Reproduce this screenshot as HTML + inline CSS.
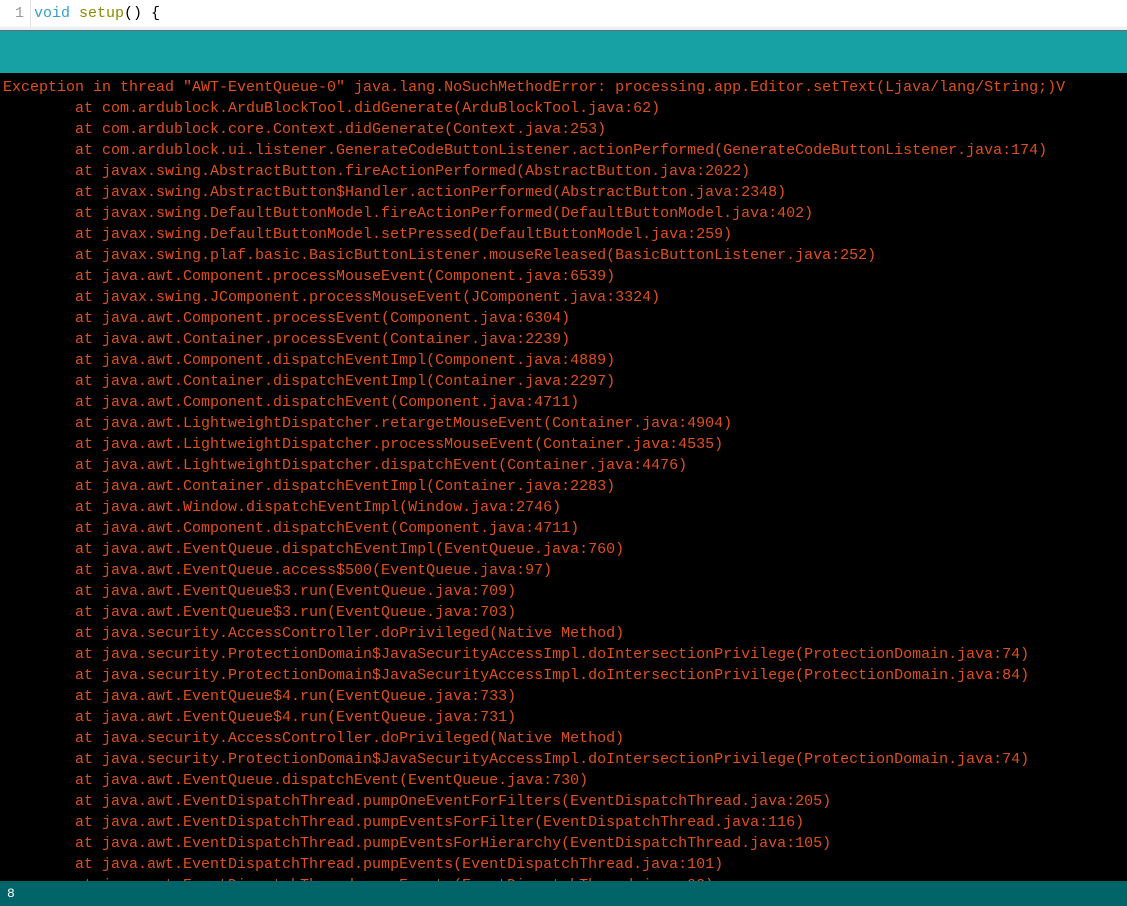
<!DOCTYPE html>
<html><head><meta charset="utf-8"><style>
*{margin:0;padding:0}
body{width:1127px;height:906px;overflow:hidden;background:#000;position:relative;font-family:"Liberation Mono",monospace}
#ed{position:absolute;left:0;top:0;width:1127px;height:27px;background:#fff}
#gut{position:absolute;left:0;top:0;width:31px;height:27px;border-right:1px solid #e0e0e0;color:#999;font-size:15px;line-height:27px;text-align:right;box-sizing:border-box;padding-right:6px}
#code{position:absolute;left:34px;top:0;font-size:15px;line-height:27px;color:#000}
#sep{position:absolute;left:0;top:27px;width:1127px;height:4px;background:#eceeef;border-bottom:1px solid #5e6f72;box-sizing:border-box}
#bar{position:absolute;left:0;top:31px;width:1127px;height:42px;background:#17a1a5}
#con{position:absolute;left:3px;top:77px;font-size:15px;line-height:21px;color:#e0501a;white-space:pre}
#st{position:absolute;left:0;top:881px;width:1127px;height:25px;background:#006468;color:#fff;font-size:13px;line-height:25px;padding-left:7px;font-family:"Liberation Mono",monospace}
</style></head><body>
<div id="ed"><div id="gut">1</div><div id="code"><span style="color:#33a1c9">void</span> <span style="color:#8c8c00">setup</span>() {</div></div>
<div id="sep"></div>
<div id="bar"></div>
<div id="con">Exception in thread "AWT-EventQueue-0" java.lang.NoSuchMethodError: processing.app.Editor.setText(Ljava/lang/String;)V
        at com.ardublock.ArduBlockTool.didGenerate(ArduBlockTool.java:62)
        at com.ardublock.core.Context.didGenerate(Context.java:253)
        at com.ardublock.ui.listener.GenerateCodeButtonListener.actionPerformed(GenerateCodeButtonListener.java:174)
        at javax.swing.AbstractButton.fireActionPerformed(AbstractButton.java:2022)
        at javax.swing.AbstractButton$Handler.actionPerformed(AbstractButton.java:2348)
        at javax.swing.DefaultButtonModel.fireActionPerformed(DefaultButtonModel.java:402)
        at javax.swing.DefaultButtonModel.setPressed(DefaultButtonModel.java:259)
        at javax.swing.plaf.basic.BasicButtonListener.mouseReleased(BasicButtonListener.java:252)
        at java.awt.Component.processMouseEvent(Component.java:6539)
        at javax.swing.JComponent.processMouseEvent(JComponent.java:3324)
        at java.awt.Component.processEvent(Component.java:6304)
        at java.awt.Container.processEvent(Container.java:2239)
        at java.awt.Component.dispatchEventImpl(Component.java:4889)
        at java.awt.Container.dispatchEventImpl(Container.java:2297)
        at java.awt.Component.dispatchEvent(Component.java:4711)
        at java.awt.LightweightDispatcher.retargetMouseEvent(Container.java:4904)
        at java.awt.LightweightDispatcher.processMouseEvent(Container.java:4535)
        at java.awt.LightweightDispatcher.dispatchEvent(Container.java:4476)
        at java.awt.Container.dispatchEventImpl(Container.java:2283)
        at java.awt.Window.dispatchEventImpl(Window.java:2746)
        at java.awt.Component.dispatchEvent(Component.java:4711)
        at java.awt.EventQueue.dispatchEventImpl(EventQueue.java:760)
        at java.awt.EventQueue.access$500(EventQueue.java:97)
        at java.awt.EventQueue$3.run(EventQueue.java:709)
        at java.awt.EventQueue$3.run(EventQueue.java:703)
        at java.security.AccessController.doPrivileged(Native Method)
        at java.security.ProtectionDomain$JavaSecurityAccessImpl.doIntersectionPrivilege(ProtectionDomain.java:74)
        at java.security.ProtectionDomain$JavaSecurityAccessImpl.doIntersectionPrivilege(ProtectionDomain.java:84)
        at java.awt.EventQueue$4.run(EventQueue.java:733)
        at java.awt.EventQueue$4.run(EventQueue.java:731)
        at java.security.AccessController.doPrivileged(Native Method)
        at java.security.ProtectionDomain$JavaSecurityAccessImpl.doIntersectionPrivilege(ProtectionDomain.java:74)
        at java.awt.EventQueue.dispatchEvent(EventQueue.java:730)
        at java.awt.EventDispatchThread.pumpOneEventForFilters(EventDispatchThread.java:205)
        at java.awt.EventDispatchThread.pumpEventsForFilter(EventDispatchThread.java:116)
        at java.awt.EventDispatchThread.pumpEventsForHierarchy(EventDispatchThread.java:105)
        at java.awt.EventDispatchThread.pumpEvents(EventDispatchThread.java:101)
        at java.awt.EventDispatchThread.pumpEvents(EventDispatchThread.java:93)</div>
<div id="st">8</div>
</body></html>
